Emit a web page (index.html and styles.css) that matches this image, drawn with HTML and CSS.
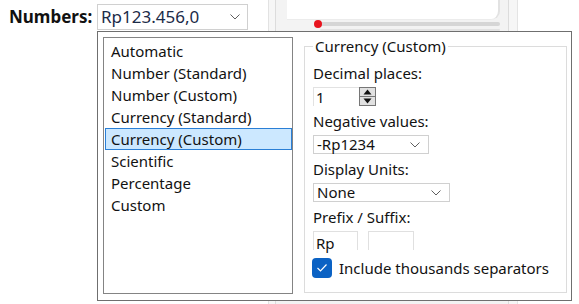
FILE: index.html
```html
<!DOCTYPE html>
<html lang="en">
<head>
  <meta charset="UTF-8">
  <title>Number format</title>
  <link rel="stylesheet" href="styles.css">
</head>
<body>
  <div class="left-area">
    <div class="num-row">
      <span class="num-label">Numbers:</span>
      <div class="select select-main">
        <span class="select-text">Rp123.456,0</span>
        <svg class="chevron" width="10" height="6" viewBox="0 0 10 6"><polyline points="0.5,0.5 5,5 9.5,0.5" fill="none" stroke="#5f5f5f" stroke-width="1"/></svg>
      </div>
    </div>
  </div>

  <div class="pane">
    <div class="pane-inner">
      <div class="card"></div>
      <div class="slider"><span class="dot"></span></div>
      <div class="slider slider-2"></div>
    </div>
  </div>

  <div class="popup">
    <ul class="format-list">
      <li>Automatic</li>
      <li>Number (Standard)</li>
      <li>Number (Custom)</li>
      <li>Currency (Standard)</li>
      <li class="selected">Currency (Custom)</li>
      <li>Scientific</li>
      <li>Percentage</li>
      <li>Custom</li>
    </ul>

    <fieldset class="options">
      <legend>Currency (Custom)</legend>

      <div class="field-label first">Decimal places:</div>
      <div class="spinner">
        <span class="spin-value">1</span>
        <svg class="spin-btns" width="17" height="19" viewBox="0 0 17 19">
          <rect x="0.5" y="0.5" width="16" height="9" fill="#e1e1e1" stroke="#767676"/>
          <rect x="0.5" y="9.5" width="16" height="9" fill="#e1e1e1" stroke="#767676"/>
          <polygon points="4.5,7.5 8.5,2.5 12.5,7.5" fill="#111"/>
          <polygon points="4.5,11.5 8.5,16.5 12.5,11.5" fill="#111"/>
        </svg>
      </div>

      <div class="field-label">Negative values:</div>
      <div class="select select-neg">
        <span class="select-text">-Rp1234</span>
        <svg class="chevron" width="10" height="6" viewBox="0 0 10 6"><polyline points="0.5,0.5 5,5 9.5,0.5" fill="none" stroke="#5f5f5f" stroke-width="1"/></svg>
      </div>

      <div class="field-label">Display Units:</div>
      <div class="select select-units">
        <span class="select-text">None</span>
        <svg class="chevron" width="10" height="6" viewBox="0 0 10 6"><polyline points="0.5,0.5 5,5 9.5,0.5" fill="none" stroke="#5f5f5f" stroke-width="1"/></svg>
      </div>

      <div class="field-label">Prefix / Suffix:</div>
      <div class="affix-row">
        <div class="affix">Rp</div>
        <div class="affix affix-2"></div>
      </div>

      <label class="check-row">
        <span class="checkbox">
          <svg width="12" height="10" viewBox="0 0 12 10"><polyline points="1.5,5 4.5,8 10.5,1.5" fill="none" stroke="#fff" stroke-width="1.2"/></svg>
        </span>
        <span>Include thousands separators</span>
      </label>
    </fieldset>
  </div>
</body>
</html>
```

FILE: styles.css
```css
html, body {
  margin: 0;
  height: 100%;
}
body {
  font-family: "Noto Sans", "Open Sans", sans-serif;
  font-size: 15px;
  color: #121212;
  background: #fff;
  display: flex;
  overflow: hidden;
}
.left-area {
  width: 268px;
  flex: none;
}
.num-row {
  display: flex;
  align-items: flex-start;
  height: 31px;
}
.num-label {
  width: 88px;
  padding-left: 9px;
  font-weight: bold;
  font-size: 17px;
  line-height: 33px;
  color: #111;
}
.select {
  box-sizing: border-box;
  display: flex;
  align-items: center;
  justify-content: space-between;
  border: 1px solid #d0d0d0;
  background: #fff;
}
.select-main {
  width: 151px;
  height: 26px;
  margin-top: 4px;
  padding: 0 7px 0 3px;
  color: #1c2b48;
  font-size: 17px;
  line-height: 22px;
}
.pane {
  box-sizing: border-box;
  width: 250px;
  flex: none;
  border-left: 1px solid #e2e2e2;
  border-right: 1px solid #e4e4e4;
  padding: 0 8px 0 6px;
  background: #f6f6f6;
}
.pane-inner {
  box-sizing: border-box;
  height: 100%;
  border-left: 1px solid #dcdcdc;
  border-right: 1px solid #dcdcdc;
  background: #f3f3f3;
  padding-left: 11px;
}
.card {
  width: 213px;
  height: 20px;
  box-sizing: border-box;
  background: #fff;
  border-right: 2px solid #e2e2e2;
  border-bottom: 1px solid #ececec;
  border-radius: 0 0 9px 0;
}
.slider {
  position: relative;
  width: 182px;
  height: 4px;
  margin: 2px 0 0 31px;
  background: #d6d6d6;
  border-radius: 2px;
}
.slider-2 {
  width: 180px;
  height: 2px;
  margin: 3px 0 0 33px;
  background: #e2e2e2;
}
.dot {
  position: absolute;
  left: -4px;
  top: -2px;
  width: 8px;
  height: 8px;
  border-radius: 50%;
  background: #e8141e;
}
.popup {
  position: absolute;
  left: 97px;
  top: 31px;
  width: 475px;
  height: 270px;
  box-sizing: border-box;
  border: 1px solid #6f6f6f;
  background: #fff;
  display: flex;
  padding: 5px 4px 6px 5px;
}
.format-list {
  box-sizing: border-box;
  width: 190px;
  flex: none;
  margin: 0;
  padding: 2px 0 0 1px;
  list-style: none;
  border: 1px solid #848484;
}
.format-list li {
  line-height: 20px;
  border: 1px solid transparent;
  padding-left: 5px;
  white-space: nowrap;
}
.format-list li.selected {
  background: #cce8ff;
  border-color: #2a7fd6;
}
.options {
  box-sizing: border-box;
  width: 264px;
  margin: -1px 0 1px 11px;
  padding: 0 8px;
  border: 1px solid #dcdcdc;
}
.options legend {
  padding: 0 2px;
  line-height: 20px;
}
.field-label {
  line-height: 24px;
  margin-top: 3px;
}
.field-label.first {
  margin-top: 5px;
}
.spinner {
  display: flex;
  margin-top: 2px;
  height: 19px;
}
.spin-value {
  box-sizing: border-box;
  width: 46px;
  border-top: 1px solid #e2e2e2;
  border-left: 1px solid #e2e2e2;
  padding-left: 2px;
  line-height: 19px;
}
.select-neg,
.select-units {
  height: 19px;
  margin-top: 2px;
  padding: 0 8px 0 3px;
  line-height: 17px;
}
.select-neg {
  width: 116px;
}
.select-units {
  width: 137px;
}
.affix-row {
  display: flex;
  gap: 10px;
  margin-top: 2px;
}
.affix {
  box-sizing: border-box;
  width: 45px;
  height: 19px;
  border: 1px solid #e0e0e0;
  border-bottom: none;
  padding-left: 2px;
  line-height: 22px;
}
.affix-2 {
  width: 46px;
}
.check-row {
  display: flex;
  align-items: center;
  gap: 7px;
  height: 24px;
  margin: 6px 0 0 -1px;
}
.checkbox {
  box-sizing: border-box;
  width: 20px;
  height: 20px;
  border-radius: 4px;
  background: #0b62c4;
  display: flex;
  align-items: center;
  justify-content: center;
}
```
